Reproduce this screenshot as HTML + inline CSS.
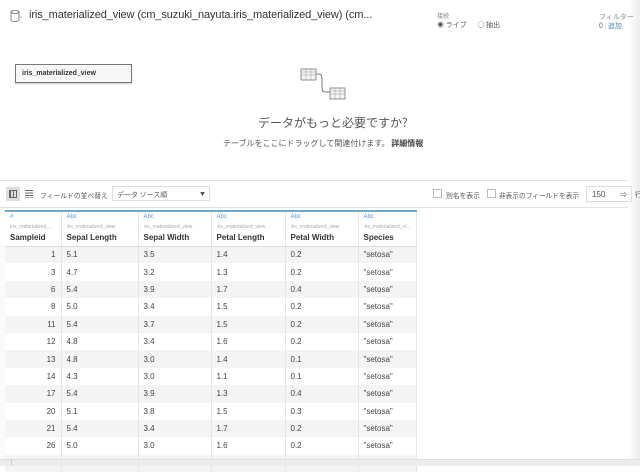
<!DOCTYPE html>
<html><head><meta charset="utf-8"><style>
*{box-sizing:border-box;margin:0;padding:0}
body{width:640px;height:466px;overflow:hidden;background:#fff;font-family:"Liberation Sans","Noto Sans CJK JP",sans-serif;color:#333;position:relative}
.a{position:absolute;white-space:nowrap}
.jp{font-family:"Noto Sans CJK JP",sans-serif}
table{border-collapse:collapse;position:absolute;left:5px;top:210px;font-size:8px}
td{height:17.4px;padding:0 5px;border-right:1px solid #e6e6e6;color:#444}
th{height:35px;border-top:2px solid #6fa8cf;border-right:1px solid #e6e6e6;text-align:left;font-weight:normal;padding:2px 5px 0;vertical-align:top;border-bottom:1px solid #ddd}
.t{font-size:6px;color:#5a95c0;display:block;height:10px}
.s{font-size:5px;color:#aaa;display:block;height:9px;overflow:hidden}
.n{font-size:8px;color:#333;font-weight:bold;display:block}
tr.g td{background:#f4f4f4}
</style></head><body>
<div class="a" style="right:0;top:0;width:12px;height:466px;background:linear-gradient(to right,#fff,#ececec)"></div>
<svg class="a" style="left:9px;top:9px" width="14" height="14" viewBox="0 0 14 14"><ellipse cx="6" cy="3" rx="4" ry="1.5" fill="none" stroke="#666" stroke-width=".8"/><path d="M2 3v8c0 1 2 1.5 4 1.5s4-.5 4-1.5V3" fill="none" stroke="#666" stroke-width=".8"/><path d="M11.5 8h1.5" stroke="#888"/></svg>
<div class="a" style="left:29px;top:9px;font-size:11px;color:#333;letter-spacing:-0.1px">iris_materialized_view (cm_suzuki_nayuta.iris_materialized_view) (cm...</div>
<div class="a jp" style="left:437px;top:11px;font-size:6px;color:#888">接続</div>
<div class="a jp" style="left:437px;top:20px;font-size:7px;color:#555">◉ ライブ &nbsp;&nbsp;&nbsp;&nbsp;&nbsp;&nbsp;○ 抽出</div>
<div class="a jp" style="left:599px;top:12px;font-size:7px;color:#888">フィルター</div>
<div class="a jp" style="left:599px;top:21px;font-size:7px;color:#666">0 <span style="color:#ccc">|</span> <span style="color:#4a8ab8">追加</span></div>
<div class="a" style="left:15px;top:64px;width:117px;height:19px;border:1px solid #777;background:#f7f7f7;font-size:7px;font-weight:bold;padding:5px 6px;box-shadow:0 1px 1px #ccc">iris_materialized_view</div>
<svg class="a" style="left:300px;top:68px" width="48" height="34" viewBox="0 0 48 34"><g fill="#f4f4f4" stroke="#777" stroke-width=".8"><rect x="1" y="1" width="15" height="11"/><rect x="30" y="20" width="15" height="11"/></g><path d="M1 4h15M1 7h15M6 1v11M11 1v11M30 23h15M30 26h15M35 20v11M40 20v11" stroke="#999" stroke-width=".5"/><path d="M16 6h3q3 0 3 4v10q0 4 3 4h5" fill="none" stroke="#555" stroke-width=".8"/></svg>
<div class="a jp" style="left:258px;top:114px;font-size:12px;color:#555">データがもっと必要ですか?</div>
<div class="a jp" style="left:223px;top:138px;font-size:8px;color:#555">テーブルをここにドラッグして関連付けます。 <b style="color:#444">詳細情報</b></div>
<div class="a" style="left:0;top:180px;width:628px;height:1px;background:#e2e2e2"></div>
<div class="a" style="left:6px;top:187px;width:14px;height:14px;background:#ddd"></div>
<div class="a" style="left:9px;top:190px;width:8px;height:8px;border:1px solid #666;background:repeating-linear-gradient(90deg,#666 0 1px,transparent 1px 3px)"></div>
<div class="a" style="left:25px;top:190px;width:8px;height:8px;background:repeating-linear-gradient(#666 0 1px,transparent 1px 2.5px)"></div>
<div class="a jp" style="left:40px;top:190px;font-size:6.8px;color:#555">フィールドの並べ替え</div>
<div class="a jp" style="left:112px;top:186px;width:98px;height:15px;border:1px solid #ddd;font-size:7px;color:#555;padding:3px 4px">データ ソース順<span style="position:absolute;right:4px;font-size:5px;top:4px">▼</span></div>
<div class="a" style="left:433px;top:189px;width:9px;height:9px;border:1px solid #bbb"></div>
<div class="a jp" style="left:446px;top:190px;font-size:6.8px;color:#555">別名を表示</div>
<div class="a" style="left:487px;top:189px;width:9px;height:9px;border:1px solid #bbb"></div>
<div class="a jp" style="left:499px;top:190px;font-size:6.7px;color:#555">非表示のフィールドを表示</div>
<div class="a" style="left:586px;top:186px;width:46px;height:16px;border:1px solid #ddd;font-size:8px;color:#555;padding:3px 5px;background:#fff">150<span style="position:absolute;right:4px;font-size:7px">⇒</span></div>
<div class="a jp" style="left:635px;top:190px;font-size:7px;color:#555">行</div>
<div class="a" style="left:0;top:207px;width:628px;height:1px;background:#e2e2e2"></div>
<div class="a" style="left:0;top:246px;width:5px;height:212px;background:#fafafa"></div>
<table>
<tr><th style="width:56px"><span class="t">#</span><span class="s">iris_materialized_...</span><span class="n">Sampleid</span></th><th style="width:77px"><span class="t">Abc</span><span class="s">iris_materialized_view</span><span class="n">Sepal Length</span></th><th style="width:73px"><span class="t">Abc</span><span class="s">iris_materialized_view</span><span class="n">Sepal Width</span></th><th style="width:74px"><span class="t">Abc</span><span class="s">iris_materialized_view</span><span class="n">Petal Length</span></th><th style="width:73px"><span class="t">Abc</span><span class="s">iris_materialized_view</span><span class="n">Petal Width</span></th><th style="width:58px"><span class="t">Abc</span><span class="s">iris_materialized_vi...</span><span class="n">Species</span></th></tr>
<tr class="g"><td align="right">1</td><td>5.1</td><td>3.5</td><td>1.4</td><td>0.2</td><td>"setosa"</td></tr>
<tr><td align="right">3</td><td>4.7</td><td>3.2</td><td>1.3</td><td>0.2</td><td>"setosa"</td></tr>
<tr class="g"><td align="right">6</td><td>5.4</td><td>3.9</td><td>1.7</td><td>0.4</td><td>"setosa"</td></tr>
<tr><td align="right">8</td><td>5.0</td><td>3.4</td><td>1.5</td><td>0.2</td><td>"setosa"</td></tr>
<tr class="g"><td align="right">11</td><td>5.4</td><td>3.7</td><td>1.5</td><td>0.2</td><td>"setosa"</td></tr>
<tr><td align="right">12</td><td>4.8</td><td>3.4</td><td>1.6</td><td>0.2</td><td>"setosa"</td></tr>
<tr class="g"><td align="right">13</td><td>4.8</td><td>3.0</td><td>1.4</td><td>0.1</td><td>"setosa"</td></tr>
<tr><td align="right">14</td><td>4.3</td><td>3.0</td><td>1.1</td><td>0.1</td><td>"setosa"</td></tr>
<tr class="g"><td align="right">17</td><td>5.4</td><td>3.9</td><td>1.3</td><td>0.4</td><td>"setosa"</td></tr>
<tr><td align="right">20</td><td>5.1</td><td>3.8</td><td>1.5</td><td>0.3</td><td>"setosa"</td></tr>
<tr class="g"><td align="right">21</td><td>5.4</td><td>3.4</td><td>1.7</td><td>0.2</td><td>"setosa"</td></tr>
<tr><td align="right">26</td><td>5.0</td><td>3.0</td><td>1.6</td><td>0.2</td><td>"setosa"</td></tr>
<tr class="g"><td></td><td></td><td></td><td></td><td></td><td></td></tr>
</table>
<div class="a" style="left:0;top:459px;width:640px;height:7px;background:#ececec;border-top:1px solid #ddd"></div>
<div class="a" style="left:11px;top:459px;width:1px;height:7px;background:#ccc"></div>
</body></html>
